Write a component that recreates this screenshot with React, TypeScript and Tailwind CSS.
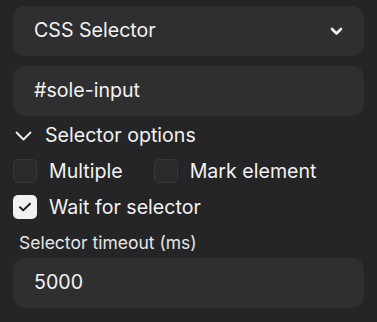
import React from 'react';

const Check: React.FC<{ checked?: boolean; label: string }> = ({ checked, label }) => (
  <div className="flex items-center gap-3">
    <div
      className={
        checked
          ? 'w-6 h-6 rounded-[5px] bg-[#f1f1f1] flex items-center justify-center'
          : 'w-6 h-6 rounded-[5px] bg-[#2a2a2c] border border-[#38383a]'
      }
    >
      {checked && (
        <svg width="14" height="14" viewBox="0 0 14 14" fill="none">
          <path d="M2 7.3l3.2 3.1L12 3.8" stroke="#1d1d1f" strokeWidth="2" strokeLinecap="round" strokeLinejoin="round" />
        </svg>
      )}
    </div>
    <span className="text-[19.6px] leading-6 text-[#f2f2f2]">{label}</span>
  </div>
);

export default function App() {
  return (
    <div
      className="w-[377px] h-[322px] bg-[#252527] px-[13px] pt-[6px] text-[#f2f2f2]"
      style={{ fontFamily: 'Inter, "Noto Sans", sans-serif' }}
    >
      <div className="h-[50px] rounded-xl bg-[#2f2f31] flex items-center justify-between pl-[21px] pr-[21px]">
        <span className="text-[19.6px]">CSS Selector</span>
        <svg width="13" height="9" viewBox="0 0 13 9" fill="none">
          <path d="M2 2l4.5 4.5L11 2" stroke="#f2f2f2" strokeWidth="2.6" strokeLinecap="round" strokeLinejoin="round" />
        </svg>
      </div>
      <div className="mt-[10px] h-[50px] rounded-xl bg-[#2f2f31] flex items-center pl-[21px]">
        <span className="text-[19.6px]">#sole-input</span>
      </div>
      <div className="mt-[8px] flex items-center gap-[13px] pl-[2px] h-[24px]">
        <svg width="17" height="10" viewBox="0 0 17 10" fill="none">
          <path d="M1.5 1.5l7 7 7-7" stroke="#f2f2f2" strokeWidth="1.8" strokeLinecap="round" strokeLinejoin="round" />
        </svg>
        <span className="text-[19.6px]">Selector options</span>
      </div>
      <div className="mt-[11px] flex items-center gap-[31px]">
        <Check label="Multiple" />
        <Check label="Mark element" />
      </div>
      <div className="mt-[12px]">
        <Check checked label="Wait for selector" />
      </div>
      <div className="mt-[12px] pl-[6px] text-[17.5px] leading-6 text-[#e6e6e6]">Selector timeout (ms)</div>
      <div className="mt-[3px] h-[50px] rounded-xl bg-[#2f2f31] flex items-center pl-[21px]">
        <span className="text-[19.6px]">5000</span>
      </div>
    </div>
  );
}
